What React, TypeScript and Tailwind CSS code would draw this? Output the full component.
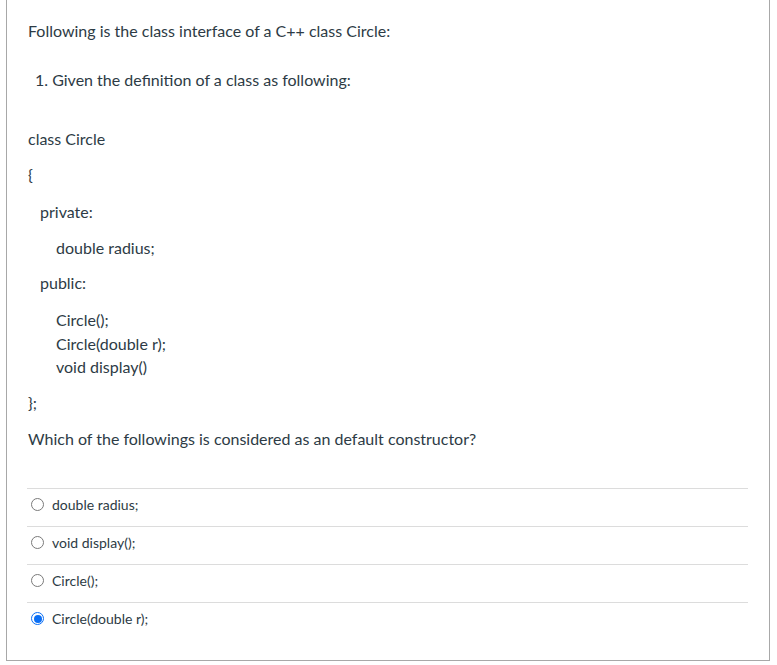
import React from 'react';

const options = [
  { label: 'double radius;', checked: false },
  { label: 'void display();', checked: false },
  { label: 'Circle();', checked: false },
  { label: 'Circle(double r);', checked: true },
];

function Radio({ checked }: { checked: boolean }) {
  if (checked) {
    return (
      <span className="flex items-center justify-center w-[13px] h-[13px] rounded-full border-[1.5px] border-[#0b6ff5] shrink-0">
        <span className="w-[8px] h-[8px] rounded-full bg-[#0b6ff5]" />
      </span>
    );
  }
  return <span className="w-[13px] h-[13px] rounded-full border border-[#7a7a7a] bg-white shrink-0" />;
}

export default function App() {
  return (
    <div className="bg-white min-h-[665px] font-['Lato','Liberation_Sans',sans-serif] text-[#2d3b45]">
      <div className="ml-[6px] w-[764px] h-[661px] border-l border-r border-b border-[#a8a8a8] pt-[19px] pl-[21px]">
        <div className="text-[16px] leading-[23px] h-[23px]">
          Following is the class interface of a C++ class Circle:
        </div>
        <div className="mt-[26px] pl-[7px] text-[16px] leading-[23px] h-[23px]">
          1. Given the definition of a class as following:
        </div>

        {/* class body */}
        <div className="text-[16px] leading-[23px]">
          <div className="mt-[36px] h-[23px]">class Circle</div>
          <div className="mt-[13px] h-[23px]">{'{'}</div>
          <div className="mt-[14px] h-[23px] pl-[12px]">private:</div>
          <div className="mt-[13px] h-[23px] pl-[28px]">double radius;</div>
          <div className="mt-[12px] h-[23px] pl-[12px]">public:</div>
          <div className="mt-[14px] pl-[28px]">
            <div className="h-[23.5px]">Circle();</div>
            <div className="h-[23.5px]">Circle(double r);</div>
            <div className="h-[23px]">void display()</div>
          </div>
          <div className="mt-[13px] h-[23px]">{'};'}</div>
          <div className="mt-[13px] h-[23px]">Which of the followings is considered as an default constructor?</div>
        </div>

        {/* answers */}
        <div className="mt-[38px] mr-[21px] -ml-[1px]">
          {options.map((opt) => (
            <div key={opt.label} className="border-t border-[#dcdcdc] h-[38px] pt-[4px]">
              <div className="flex items-center h-[23px] pl-[4px] gap-[8px] text-[14px]">
                <Radio checked={opt.checked} />
                <span>{opt.label}</span>
              </div>
            </div>
          ))}
        </div>
      </div>
    </div>
  );
}
